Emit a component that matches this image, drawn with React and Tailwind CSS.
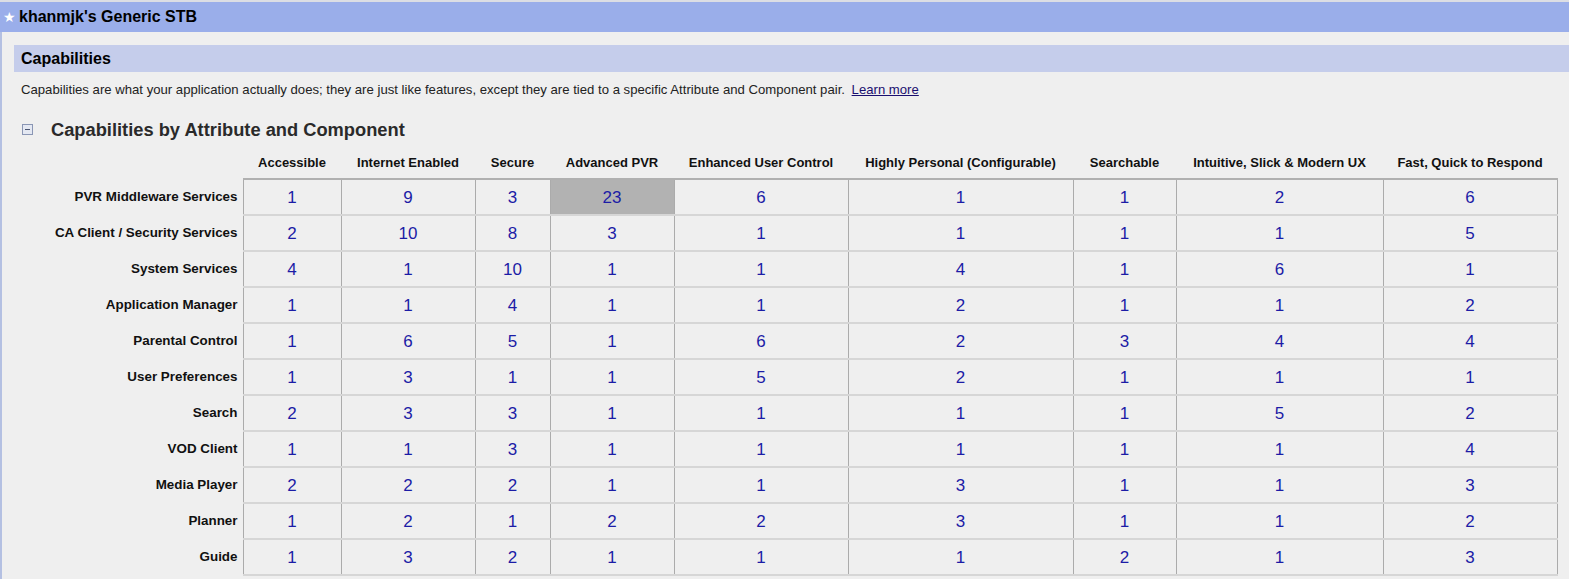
const columns = [
  { name: 'Accessible', w: 98 },
  { name: 'Internet Enabled', w: 134 },
  { name: 'Secure', w: 75 },
  { name: 'Advanced PVR', w: 124 },
  { name: 'Enhanced User Control', w: 174 },
  { name: 'Highly Personal (Configurable)', w: 225 },
  { name: 'Searchable', w: 103 },
  { name: 'Intuitive, Slick & Modern UX', w: 207 },
  { name: 'Fast, Quick to Respond', w: 174 },
];

const rows = [
  ['PVR Middleware Services', [1, 9, 3, 23, 6, 1, 1, 2, 6]],
  ['CA Client / Security Services', [2, 10, 8, 3, 1, 1, 1, 1, 5]],
  ['System Services', [4, 1, 10, 1, 1, 4, 1, 6, 1]],
  ['Application Manager', [1, 1, 4, 1, 1, 2, 1, 1, 2]],
  ['Parental Control', [1, 6, 5, 1, 6, 2, 3, 4, 4]],
  ['User Preferences', [1, 3, 1, 1, 5, 2, 1, 1, 1]],
  ['Search', [2, 3, 3, 1, 1, 1, 1, 5, 2]],
  ['VOD Client', [1, 1, 3, 1, 1, 1, 1, 1, 4]],
  ['Media Player', [2, 2, 2, 1, 1, 3, 1, 1, 3]],
  ['Planner', [1, 2, 1, 2, 2, 3, 1, 1, 2]],
  ['Guide', [1, 3, 2, 1, 1, 1, 2, 1, 3]],
];

export default function App() {
  return (
    <div
      className="w-[1569px] h-[579px] overflow-hidden bg-[#efefef] text-black"
      style={{ fontFamily: '"Liberation Sans", Arial, sans-serif' }}
    >
      <div className="h-[2px] bg-[#dcdee4]" />
      {/* Project header */}
      <div className="h-[30px] bg-[#9aaeea] flex items-center">
        <span className="text-white text-[14px] leading-none ml-[3px] w-[16px]">★</span>
        <h1 className="text-[16px] font-bold">khanmjk's Generic STB</h1>
      </div>

      <div className="border-l-2 border-[#b4c0e2] h-full">
        <div className="pl-[12px] pt-[13px]">
          <div className="h-[27px] bg-[#c5cdeb] flex items-center pl-[7px]">
            <h2 className="text-[16px] font-bold">Capabilities</h2>
          </div>
        </div>

        <p className="text-[13.15px] text-[#222] pl-[19px] mt-[10px] leading-[15px]">
          Capabilities are what your application actually does; they are just like features, except they are tied to a specific Attribute and Component pair.{' '}
          <a href="#" className="ml-[3px] text-[#1a0f70] underline">Learn more</a>
        </p>

        {/* Section heading */}
        <div className="flex items-center pl-[20px] mt-[19px]">
          <span className="w-[11px] h-[11px] border border-[#8a96b4] bg-[#e4e8f2] flex items-center justify-center">
            <span className="w-[5px] h-[1px] bg-[#4a5470]" />
          </span>
          <h3 className="ml-[18px] text-[18.3px] font-bold text-[#2a2a2a]">Capabilities by Attribute and Component</h3>
        </div>

        <table className="border-collapse table-fixed mt-[10px] w-[1555px]">
          <colgroup>
            <col className="w-[241px]" />
            {columns.map((c) => (
              <col key={c.name} style={{ width: c.w }} />
            ))}
          </colgroup>
          <thead>
            <tr className="h-[26px]">
              <th />
              {columns.map((c) => (
                <th key={c.name} className="text-[13px] font-bold text-[#111] text-center align-top whitespace-nowrap">
                  {c.name}
                </th>
              ))}
            </tr>
          </thead>
          <tbody>
            {rows.map(([label, vals], ri) => (
              <tr key={label} className="h-[36px]">
                <td className="text-right pr-[5px] text-[13.4px] font-bold text-[#111] whitespace-nowrap">{label}</td>
                {vals.map((v, ci) => (
                  <td
                    key={ci}
                    className={`text-center text-[17px] text-[#1c1ca6] border-x border-x-[#ababab] border-y-2 border-y-[#d6d6d6] ${
                      ri === 0 ? 'border-t-[#b0b0b0]' : ''
                    } ${ri === 0 && ci === 3 ? 'bg-[#b2b2b2]' : ''}`}
                  >
                    {v}
                  </td>
                ))}
              </tr>
            ))}
          </tbody>
        </table>
      </div>
    </div>
  );
}
